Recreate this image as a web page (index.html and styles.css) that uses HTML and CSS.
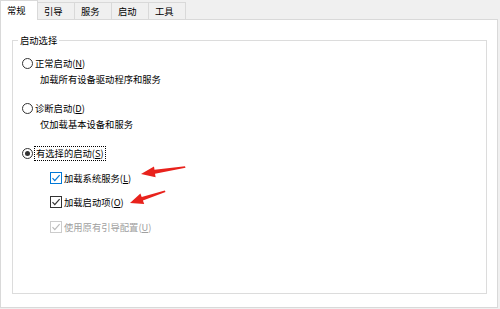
FILE: index.html
```html
<!DOCTYPE html>
<html lang="zh-CN">
<head>
    <meta charset="UTF-8">
    <title>系统配置</title>
    <link rel="stylesheet" href="styles.css">
</head>
<body>
    <div class="tabs">
        <div class="tab active">常规</div>
        <div class="tab">引导</div>
        <div class="tab">服务</div>
        <div class="tab">启动</div>
        <div class="tab">工具</div>
    </div>

    <div class="panel">
        <div class="group">
            <div class="legend">启动选择</div>

            <div class="opt r1"><span class="radio"></span>正常启动(<u>N</u>)</div>
            <div class="desc">加载所有设备驱动程序和服务</div>

            <div class="opt r2"><span class="radio"></span>诊断启动(<u>D</u>)</div>
            <div class="desc">仅加载基本设备和服务</div>

            <div class="opt r3"><span class="radio on"></span><span class="focus">有选择的启动(<u>S</u>)</span></div>

            <div class="chk c1">
                <svg class="box hot" viewBox="0 0 12 12"><rect x="0.5" y="0.5" width="11" height="11"/><path d="M2.5 6.2 L4.8 8.6 L9.6 3.2"/></svg>
                加载系统服务(<u>L</u>)
            </div>
            <div class="chk c2">
                <svg class="box" viewBox="0 0 12 12"><rect x="0.5" y="0.5" width="11" height="11"/><path d="M2.5 6.2 L4.8 8.6 L9.6 3.2"/></svg>
                加载启动项(<u>O</u>)
            </div>
            <div class="chk c3 disabled">
                <svg class="box" viewBox="0 0 12 12"><rect x="0.5" y="0.5" width="11" height="11"/><path d="M2.5 6.2 L4.8 8.6 L9.6 3.2"/></svg>
                使用原有引导配置(<u>U</u>)
            </div>
        </div>
    </div>

    <!-- 红色标注箭头 -->
    <svg class="marks" width="500" height="309" viewBox="0 0 500 309">
        <polygon points="141,174 155.6,177.2 155,173.8 185.5,167.8 185,166.2 154.5,169.8 154,166.4"/>
        <polygon points="130,203 144.2,204 142.9,200.5 165.5,192 164.8,190.4 141.7,197.1 140.4,193.6"/>
    </svg>
</body>
</html>
```

FILE: styles.css
```css
body {
    margin: 0;
    width: 500px;
    height: 309px;
    overflow: hidden;
    background: #f0f0f0;
    font-family: "Noto Sans CJK SC", "Microsoft YaHei", sans-serif;
    font-size: 9.3px;
    color: #000;
    position: relative;
}
u {
    text-decoration: underline;
    text-underline-offset: 1px;
}

.tabs {
    display: flex;
    align-items: flex-end;
    height: 19px;
}
.tab {
    box-sizing: border-box;
    width: 38px;
    height: 17px;
    margin-left: -1px;
    padding-left: 6px;
    line-height: 16px;
    border: 1px solid #d9d9d9;
    border-bottom: none;
    background: #f0f0f0;
}
.tab:first-child { margin-left: 0; }
.tab.active {
    height: 20px;
    line-height: 18px;
    margin-bottom: -1px;
    background: #fff;
    position: relative;
    z-index: 1;
}

.panel {
    box-sizing: border-box;
    width: 498px;
    height: 289px;
    border: 1px solid #d9d9d9;
    background: #fff;
}

.group {
    box-sizing: border-box;
    width: 475px;
    height: 254px;
    margin: 20px 0 0 11px;
    border: 1px solid #dcdcdc;
}
.legend {
    width: fit-content;
    margin: -9px 0 0 5px;
    padding: 0 2px;
    line-height: 16px;
    background: #fff;
}

.opt, .desc, .chk {
    height: 16px;
    line-height: 16px;
    display: flex;
    align-items: center;
}
.opt { padding-left: 9px; }
.desc { padding-left: 27px; }
.chk { padding-left: 37px; }

.r1 { margin-top: 7px; }
.r2 { margin-top: 13px; }
.r3 { margin-top: 13px; }
.c1 { margin-top: 9px; }
.c2 { margin-top: 8px; }
.c3 { margin-top: 9px; }

.radio {
    box-sizing: border-box;
    width: 11px;
    height: 11px;
    margin-right: 2px;
    border: 1px solid #333;
    border-radius: 50%;
    display: flex;
    align-items: center;
    justify-content: center;
}
.radio.on::after {
    content: "";
    width: 5px;
    height: 5px;
    border-radius: 50%;
    background: #333;
}
.focus {
    outline: 1px dotted #000;
    line-height: 13px;
    padding: 0 1px;
}

.box {
    width: 12px;
    height: 12px;
    margin-right: 2px;
    flex: none;
}
.box rect { fill: #fff; stroke: #333; }
.box path { fill: none; stroke: #333; stroke-width: 1.2; }
.box.hot rect { stroke: #0078d7; }
.box.hot path { stroke: #0078d7; }
.disabled { color: #a0a0a0; }
.disabled .box rect { stroke: #ccc; }
.disabled .box path { stroke: #bbb; }

.marks {
    position: absolute;
    left: 0;
    top: 0;
    pointer-events: none;
}
.marks polygon { fill: #e8221c; }
```
